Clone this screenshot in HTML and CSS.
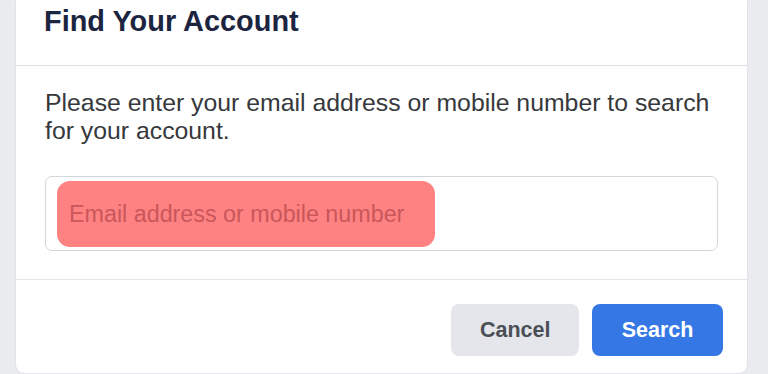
FILE: index.html
```html
<!DOCTYPE html>
<html lang="en">
<head>
<meta charset="utf-8">
<title>Find Your Account</title>
<link rel="stylesheet" href="styles.css">
</head>
<body>
<div class="page">
  <div class="card">
    <div class="card-header">
      <h2 class="title">Find Your Account</h2>
    </div>
    <div class="card-body">
      <p class="intro">Please enter your email address or mobile number to search for your account.</p>
      <div class="field">
        <input class="field-input" type="text" placeholder="Email address or mobile number">
        <div class="highlight"><span class="highlight-text">Email address or mobile number</span></div>
      </div>
    </div>
    <div class="card-footer">
      <button class="btn btn-cancel" type="button">Cancel</button>
      <button class="btn btn-search" type="button">Search</button>
    </div>
  </div>
</div>
</body>
</html>
```
FILE: styles.css
```css
html, body {
  margin: 0;
  padding: 0;
  background: #e9ebee;
  font-family: "Liberation Sans", Arial, sans-serif;
  overflow: hidden;
}

.page {
  height: 374px;
  padding-left: 16px;
}

.card {
  width: 731px;
  height: 373px;
  background: #ffffff;
  border-radius: 0 0 8px 8px;
  box-shadow: 0 0 2px rgba(0, 0, 0, 0.12);
  box-sizing: border-box;
}

.card-header {
  height: 66px;
  box-sizing: border-box;
  padding: 4px 28px 0 28px;
  border-bottom: 1px solid #dddfe2;
}

.title {
  margin: 0;
  font-size: 28.9px;
  line-height: 34px;
  font-weight: bold;
  color: #1c2540;
}

.card-body {
  padding: 23px 29px 28px 29px;
  border-bottom: 1px solid #e3e5e8;
}

.intro {
  margin: 0 0 32px 0;
  font-size: 24.8px;
  line-height: 27.5px;
  color: #36383c;
}

.field {
  position: relative;
  height: 75px;
  width: 673px;
}

.field-input {
  display: block;
  width: 100%;
  height: 75px;
  box-sizing: border-box;
  border: 1px solid #d3d6db;
  border-radius: 7px;
  padding: 0 24px;
  font-family: "Liberation Sans", Arial, sans-serif;
  font-size: 23.3px;
  color: #1c1e21;
  background: #ffffff;
  outline: none;
}

.field-input::placeholder {
  color: transparent;
}

.highlight {
  position: absolute;
  left: 12px;
  top: 5px;
  width: 378px;
  height: 66px;
  background: #ff8282;
  border-radius: 13px;
  display: flex;
  align-items: center;
  padding-left: 12px;
  box-sizing: border-box;
}

.highlight-text {
  font-size: 23.3px;
  color: #c9575b;
  white-space: nowrap;
}

.card-footer {
  display: flex;
  justify-content: flex-end;
  gap: 13px;
  padding: 24px 24px 0 0;
}

.btn {
  height: 52px;
  border: none;
  border-radius: 8px;
  padding: 0 29px;
  font-family: "Liberation Sans", Arial, sans-serif;
  font-size: 21.5px;
  font-weight: bold;
  cursor: pointer;
}

.btn-cancel {
  width: 128px;
  background: #e4e6eb;
  color: #4b4f56;
}

.btn-search {
  width: 131px;
  background: #3578e5;
  color: #ffffff;
}
```
